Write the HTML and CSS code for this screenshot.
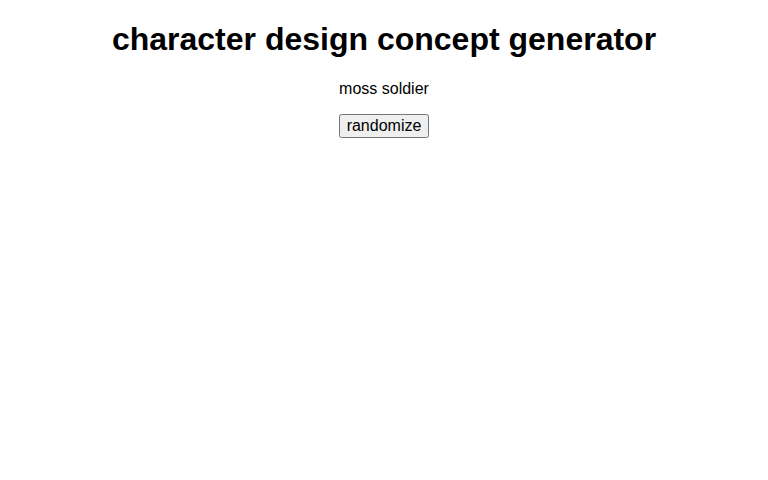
FILE: index.html
```html
<!DOCTYPE html>
<html>
<head>
<meta charset="utf-8">
<link rel="stylesheet" href="styles.css">
</head>
<body class="page">
<h1 class="title">character design concept generator</h1>
<p class="result">moss soldier</p>
<button class="btn">randomize</button>
</body>
</html>
```
FILE: styles.css
```css
.page {
  margin: 0 8px 8px;
  font-family: "Liberation Sans", Arial, sans-serif;
  text-align: center;
  background: #fff;
  color: #000;
}
.btn {
  font-family: "Liberation Sans", Arial, sans-serif;
  font-size: 16px;
}
```
